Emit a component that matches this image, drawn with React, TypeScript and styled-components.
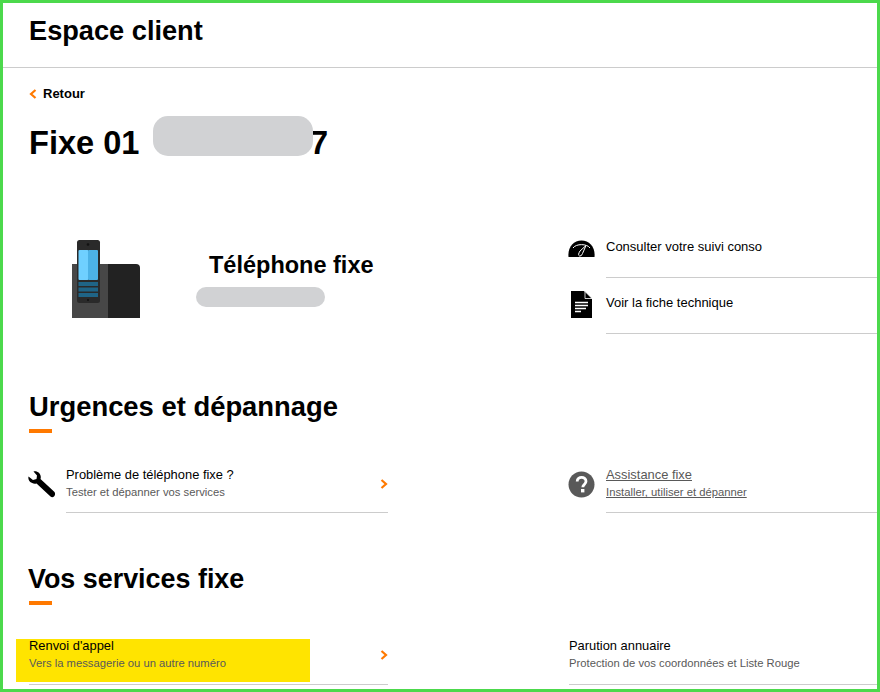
import React from "react";
import styled, { createGlobalStyle } from "styled-components";

const Global = createGlobalStyle`
  html, body { margin: 0; padding: 0; background: #fff; }
  body { font-family: "Liberation Sans", Arial, sans-serif; color: #000; }
`;

const Frame = styled.div`
  position: relative;
  box-sizing: border-box;
  width: 880px;
  height: 692px;
  overflow: hidden;
  border: 3px solid #4cd94c;
  background: #fff;
`;

const Header = styled.header`
  height: 64px;
  box-sizing: content-box;
  border-bottom: 1px solid #ccc;
  padding-left: 26px;
  display: flex;
  align-items: center;
`;

const Brand = styled.h1`
  margin: 0 0 8px;
  font-size: 27.2px;
  line-height: 32px;
  font-weight: 700;
`;

const Main = styled.main`
  padding: 0 0 0 26px;
`;

const Back = styled.div`
  display: flex;
  align-items: center;
  gap: 6px;
  height: 16px;
  margin-top: 18px;
  font-size: 13px;
  font-weight: 700;
  line-height: 16px;
`;

const Title = styled.h2`
  position: relative;
  margin: 22px 0 0;
  font-size: 32.6px;
  line-height: 38px;
  font-weight: 700;
  display: flex;
  justify-content: space-between;
  width: 299px;
`;

const Blob = styled.div<{ $w: number; $h: number; $l: number; $t: number; $r: number }>`
  position: absolute;
  left: ${(p) => p.$l}px;
  top: ${(p) => p.$t}px;
  width: ${(p) => p.$w}px;
  height: ${(p) => p.$h}px;
  border-radius: ${(p) => p.$r}px;
  background: #d1d2d4;
`;

const Device = styled.section`
  box-sizing: border-box;
  display: grid;
  grid-template-columns: 539px 1fr;
  margin-top: 52px;
  padding-top: 8px;
  height: 123px;
`;

const DeviceInfo = styled.div`
  display: flex;
  align-items: flex-start;
`;

const PhoneBox = styled.div`
  margin: 18px 0 0 43px;
  width: 68px;
  height: 78px;
`;

const DeviceText = styled.div`
  position: relative;
  margin: 28px 0 0 69px;
  font-size: 23.5px;
  line-height: 30px;
  font-weight: 700;
`;

const QuickList = styled.div`
  display: flex;
  flex-direction: column;
`;

const QuickRow = styled.div`
  display: grid;
  grid-template-columns: 38px 1fr;
  height: 56px;
`;

const QuickIcon = styled.div<{ $top: number }>`
  display: flex;
  justify-content: center;
  width: 27px;
  padding-top: ${(p) => p.$top}px;
`;

const QuickText = styled.div`
  border-bottom: 1px solid #ccc;
  font-size: 13px;
  line-height: 16px;
  padding-top: 17px;
  box-sizing: border-box;
  height: 56px;
`;

const Section = styled.section<{ $top: number }>`
  margin-top: ${(p) => p.$top}px;
`;

const SectionTitle = styled.h3<{ $size: number; $shift?: number }>`
  margin: 0 0 0 ${(p) => p.$shift ?? 0}px;
  font-size: ${(p) => p.$size}px;
  line-height: 32px;
  font-weight: 700;
`;

const Accent = styled.div`
  width: 23px;
  height: 4px;
  margin-top: 6px;
  background: #ff7900;
`;

const Cards = styled.div<{ $top: number }>`
  display: grid;
  grid-template-columns: 359px 1fr;
  column-gap: 181px;
  margin-top: ${(p) => p.$top}px;
`;

const Card = styled.div<{ $plain?: boolean }>`
  display: grid;
  grid-template-columns: ${(p) => (p.$plain ? "1fr" : "37px 1fr")};
`;

const CardIcon = styled.div<{ $shift?: number }>`
  padding-top: 9px;
  margin-left: ${(p) => p.$shift ?? 0}px;
`;

const CardBody = styled.div<{ $h: number }>`
  position: relative;
  z-index: 1;
  box-sizing: border-box;
  display: flex;
  justify-content: space-between;
  align-items: flex-start;
  height: ${(p) => p.$h}px;
  padding-top: 4px;
  border-bottom: 1px solid #ccc;
`;

const CardText = styled.div`
  display: flex;
  flex-direction: column;
  align-items: flex-start;
`;

const CardTitle = styled.div<{ $link?: boolean }>`
  font-size: 12.9px;
  line-height: 18px;
  color: ${(p) => (p.$link ? "#595959" : "#000")};
  text-decoration: ${(p) => (p.$link ? "underline" : "none")};
`;

const CardSub = styled.div<{ $link?: boolean; $gap?: number }>`
  font-size: 11.25px;
  line-height: 17px;
  margin-top: ${(p) => p.$gap ?? 0}px;
  color: #595959;
  text-decoration: ${(p) => (p.$link ? "underline" : "none")};
`;

const Arrow = styled.div`
  margin-top: 9px;
`;

const Highlight = styled.div`
  position: absolute;
  left: 13px;
  top: 636px;
  width: 294px;
  height: 43px;
  background: #ffe400;
`;

const Chevron = ({ flip }: { flip?: boolean }) => (
  <svg width="8" height="10" viewBox="0 0 8 10" style={flip ? { transform: "scaleX(-1)" } : undefined}>
    <path d="M1.5 1 L6 5 L1.5 9" fill="none" stroke="#ff7900" strokeWidth="2.2" />
  </svg>
);

const Phone = () => (
  <svg width="68" height="78" viewBox="0 0 68 78">
    <path d="M0 24 H36 V78 H0 Z" fill="#474747" />
    <path d="M36 24 H64 Q68 24 68 28 V78 H36 Z" fill="#222" />
    <rect x="5" y="0" width="23" height="63" rx="2.5" fill="#2a2a2a" />
    <circle cx="16" cy="4.5" r="1.3" fill="#111" />
    <rect x="6.5" y="10" width="10" height="30" rx="1" fill="#6fd0ff" />
    <rect x="16" y="10" width="10" height="30" rx="1" fill="#4cb2e6" />
    <rect x="6.5" y="42" width="19.5" height="4" fill="#1f6486" />
    <rect x="6.5" y="47.5" width="19.5" height="4" fill="#1f6486" />
    <rect x="6.5" y="53" width="19.5" height="4" fill="#1f6486" />
    <circle cx="16" cy="60" r="1" fill="#111" />
  </svg>
);

const Gauge = () => (
  <svg width="27" height="17" viewBox="0 0 27 17">
    <path d="M0.5 17 C-0.5 7 5.5 0.5 13.5 0.5 C21.5 0.5 27.5 7 26.5 17 H0.5 Z" fill="#000" />
    <path d="M5 8 C8 3.5 19 3.5 22 8" fill="none" stroke="#fff" strokeWidth="1" />
    <path d="M18 5.5 L12 11 Q9.5 15 11.5 16 Q13.5 16.5 14.5 13.5 Z" fill="#000" stroke="#fff" strokeWidth="1" />
  </svg>
);

const Doc = () => (
  <svg width="21" height="27" viewBox="0 0 21 27">
    <path d="M0 0 H13 L21 8 V27 H0 Z" fill="#000" />
    <path d="M14 0.5 L21 7.5 H14 Z" fill="#000" stroke="#fff" strokeWidth="0.8" />
    <path d="M4 11.5 H17 M4 14.5 H17 M4 17.5 H15 M4 20.5 H10" stroke="#fff" strokeWidth="1.4" />
  </svg>
);

const Wrench = () => (
  <svg width="28" height="27" viewBox="0 0 28 27">
    <path
      d="M0.5 5.5 L5 9 L8.5 8 L9 4.5 L5.5 0.5 C9.5 -0.5 14 3 12.5 8 L26.5 21 C28.5 24 25 28 22.5 25.5 L8.5 12.5 C3.5 13.5 -0.5 10 0.5 5.5 Z"
      fill="#000"
    />
  </svg>
);

const Question = () => (
  <svg width="27" height="27" viewBox="0 0 27 27">
    <circle cx="13.5" cy="13.5" r="13" fill="#595959" />
    <path
      d="M9.2 10.5 C9.2 5 18 5 18 10.3 C18 13.5 14.8 13.5 14.8 16.3"
      fill="none"
      stroke="#fff"
      strokeWidth="2.8"
    />
    <rect x="13" y="18" width="3.4" height="3.4" fill="#fff" />
  </svg>
);

export default function App() {
  return (
    <>
      <Global />
      <Frame>
        <Highlight />
        <Header>
          <Brand>Espace client</Brand>
        </Header>
        <Main>
          <Back>
            <Chevron flip />
            Retour
          </Back>
          <Title>
            <span>Fixe 01</span>
            <span>7</span>
            <Blob $l={124} $t={-8} $w={160} $h={40} $r={15} />
          </Title>
          <Device>
            <DeviceInfo>
              <PhoneBox>
                <Phone />
              </PhoneBox>
              <DeviceText>
                Téléphone fixe
                <Blob $l={-13} $t={37} $w={129} $h={20} $r={10} />
              </DeviceText>
            </DeviceInfo>
            <QuickList>
              <QuickRow>
                <QuickIcon $top={18}>
                  <Gauge />
                </QuickIcon>
                <QuickText>Consulter votre suivi conso</QuickText>
              </QuickRow>
              <QuickRow>
                <QuickIcon $top={13}>
                  <Doc />
                </QuickIcon>
                <QuickText>Voir la fiche technique</QuickText>
              </QuickRow>
            </QuickList>
          </Device>
          <Section $top={54}>
            <SectionTitle $size={27.4}>Urgences et dépannage</SectionTitle>
            <Accent />
          </Section>
          <Cards $top={29}>
            <Card>
              <CardIcon $shift={-1}>
                <Wrench />
              </CardIcon>
              <CardBody $h={51}>
                <CardText>
                  <CardTitle>Problème de téléphone fixe ?</CardTitle>
                  <CardSub>Tester et dépanner vos services</CardSub>
                </CardText>
                <Arrow>
                  <Chevron />
                </Arrow>
              </CardBody>
            </Card>
            <Card>
              <CardIcon $shift={-1}>
                <Question />
              </CardIcon>
              <CardBody $h={51}>
                <CardText>
                  <CardTitle $link>Assistance fixe</CardTitle>
                  <CardSub $link>Installer, utiliser et dépanner</CardSub>
                </CardText>
              </CardBody>
            </Card>
          </Cards>
          <Section $top={50}>
            <SectionTitle $size={26.9} $shift={-1}>Vos services fixe</SectionTitle>
            <Accent />
          </Section>
          <Cards $top={28}>
            <Card $plain>
              <CardBody $h={52}>
                <CardText>
                  <CardTitle>Renvoi d'appel</CardTitle>
                  <CardSub>Vers la messagerie ou un autre numéro</CardSub>
                </CardText>
                <Arrow>
                  <Chevron />
                </Arrow>
              </CardBody>
            </Card>
            <Card $plain>
              <CardBody $h={52}>
                <CardText>
                  <CardTitle>Parution annuaire</CardTitle>
                  <CardSub>Protection de vos coordonnées et Liste Rouge</CardSub>
                </CardText>
              </CardBody>
            </Card>
          </Cards>
        </Main>
      </Frame>
    </>
  );
}
